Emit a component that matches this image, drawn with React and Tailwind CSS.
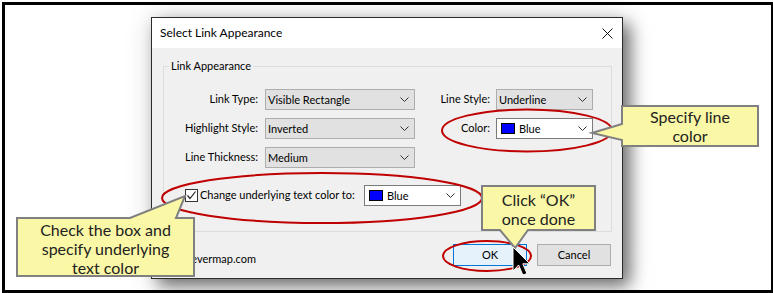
import React from "react";

const ui = { fontFamily: 'Lato, "Segoe UI", Arial, sans-serif' };
const callFont = { fontFamily: 'Lato, "Open Sans", sans-serif' };

function Chevron() {
  return (
    <svg width="9" height="5" viewBox="0 0 9 5" className="shrink-0">
      <polyline points="0.5,0.5 4.5,4.5 8.5,0.5" fill="none" stroke="#333" strokeWidth="1" />
    </svg>
  );
}

function Select({ className, white, swatch, children }) {
  return (
    <div
      className={`flex items-center h-[21px] border pr-[5px] whitespace-nowrap ${
        white ? "bg-white border-[#7a7a7a]" : "bg-[#e1e1e1] border-[#adadad]"
      } ${className}`}
    >
      {swatch && <span className="ml-[4px] w-[14px] h-[11px] border border-black bg-[#0000ff] shrink-0" />}
      <span className={`${swatch ? "ml-[4px]" : "ml-[2px]"} flex-1 leading-none`}>{children}</span>
      <Chevron />
    </div>
  );
}

export default function App() {
  return (
    <div className="relative w-[773px] h-[293px] bg-white overflow-hidden text-[11px] text-black whitespace-nowrap" style={ui}>
      <div className="ml-[2px] mt-[2px] w-[772px] h-[291px] border-[3px] border-black bg-white pl-[146px] pt-[12px]">
        <div className="w-[472px] h-[262px] border border-[#2b2b2b] bg-[#f0f0f0] flex flex-col shadow-[7px_7px_16px_rgba(0,0,0,0.55),0_0_28px_rgba(0,0,0,0.12)]">
          <div className="h-[30px] bg-white flex items-center justify-between pl-[8px] pr-[9px] shrink-0 text-[12px]">
            <span>Select Link Appearance</span>
            <svg width="11" height="11" viewBox="0 0 11 11">
              <path d="M0.5 0.5 L10.5 10.5 M10.5 0.5 L0.5 10.5" stroke="#111" strokeWidth="1" />
            </svg>
          </div>
          <div className="flex-1 pt-[10px] pl-[11px] pr-[11px] flex flex-col">
            <fieldset className="w-[449px] h-[174px] border border-[#dcdcdc] pt-[15px]">
              <legend className="ml-[5px] px-[2px] leading-[16px]">Link Appearance</legend>
              <div className="flex flex-col gap-[8px]">
                <div className="flex items-center h-[21px]">
                  <span className="w-[94px] text-right">Link Type:</span>
                  <Select className="ml-[7px] w-[150px]">Visible Rectangle</Select>
                  <span className="w-[75px] text-right">Line Style:</span>
                  <Select className="ml-[6px] w-[97px]">Underline</Select>
                </div>
                <div className="flex items-center h-[21px]">
                  <span className="w-[94px] text-right">Highlight Style:</span>
                  <Select className="ml-[7px] w-[150px]">Inverted</Select>
                  <span className="w-[75px] text-right">Color:</span>
                  <Select className="ml-[6px] w-[97px]" white swatch>Blue</Select>
                </div>
                <div className="flex items-center h-[21px]">
                  <span className="w-[94px] text-right">Line Thickness:</span>
                  <Select className="ml-[7px] w-[150px]">Medium</Select>
                </div>
              </div>
              <div className="mt-[17px] flex items-center h-[21px] pl-[21px]">
                <span className="w-[13px] h-[13px] border border-[#333] bg-white flex items-center justify-center shrink-0">
                  <svg width="11" height="11" viewBox="0 0 11 11">
                    <polyline points="1.5,5.5 4,8.5 9.5,1.5" fill="none" stroke="#222" strokeWidth="1.2" />
                  </svg>
                </span>
                <span className="ml-[2px] w-[164px] shrink-0">Change underlying text color to:</span>
                <Select className="w-[97px]" white swatch>Blue</Select>
              </div>
            </fieldset>
            <div className="mt-[12px] flex items-center h-[22px]">
              <span className="mt-[8px]">www.evermap.com</span>
              <button className="ml-auto w-[74px] h-[22px] bg-[#e5f1fb] border border-[#0078d7]">OK</button>
              <button className="ml-[10px] w-[74px] h-[22px] bg-[#e1e1e1] border border-[#adadad]">Cancel</button>
            </div>
          </div>
        </div>
      </div>

      {/* annotation overlay */}
      <svg className="absolute left-0 top-0" width="773" height="293" viewBox="0 0 773 293">
        <g fill="none" stroke="#c00000" strokeWidth="2">
          <ellipse cx="527" cy="130.5" rx="85" ry="21" />
          <ellipse cx="322" cy="198" rx="160" ry="25" />
          <ellipse cx="487" cy="256" rx="44" ry="15" />
        </g>
        <g fill="#faf8a6" stroke="#808080" strokeWidth="2" strokeLinejoin="miter">
          <path d="M622,106 H758 V146 H622 V140 L592,133 L622,124 Z" />
          <path d="M17,218 H130 L185,196 L176,218 H194 V276 H17 Z" />
          <path d="M482,186 H595 V230 H528 L515,248 L500,230 H482 Z" />
        </g>
      </svg>

      <div className="absolute left-[622px] top-[107px] w-[136px] text-center text-[16px] leading-[19px] text-[#222]" style={callFont}>
        Specify line<br />color
      </div>
      <div className="absolute left-[17px] top-[220px] w-[177px] text-center text-[16px] leading-[19px] text-[#222]" style={callFont}>
        Check the box and<br />specify underlying<br />text color
      </div>
      <div className="absolute left-[482px] top-[190px] w-[113px] text-center text-[16px] leading-[19px] text-[#222]" style={callFont}>
        Click “OK”<br />once done
      </div>

      <svg className="absolute left-[512px] top-[246px]" width="20" height="32" viewBox="0 0 20 32">
        <path d="M1,1 L1,25 L6.6,19 L10.8,29 L15,27.6 L10.8,17.8 L17.8,17.8 Z" fill="#000" stroke="#fff" strokeWidth="1" />
      </svg>
    </div>
  );
}
